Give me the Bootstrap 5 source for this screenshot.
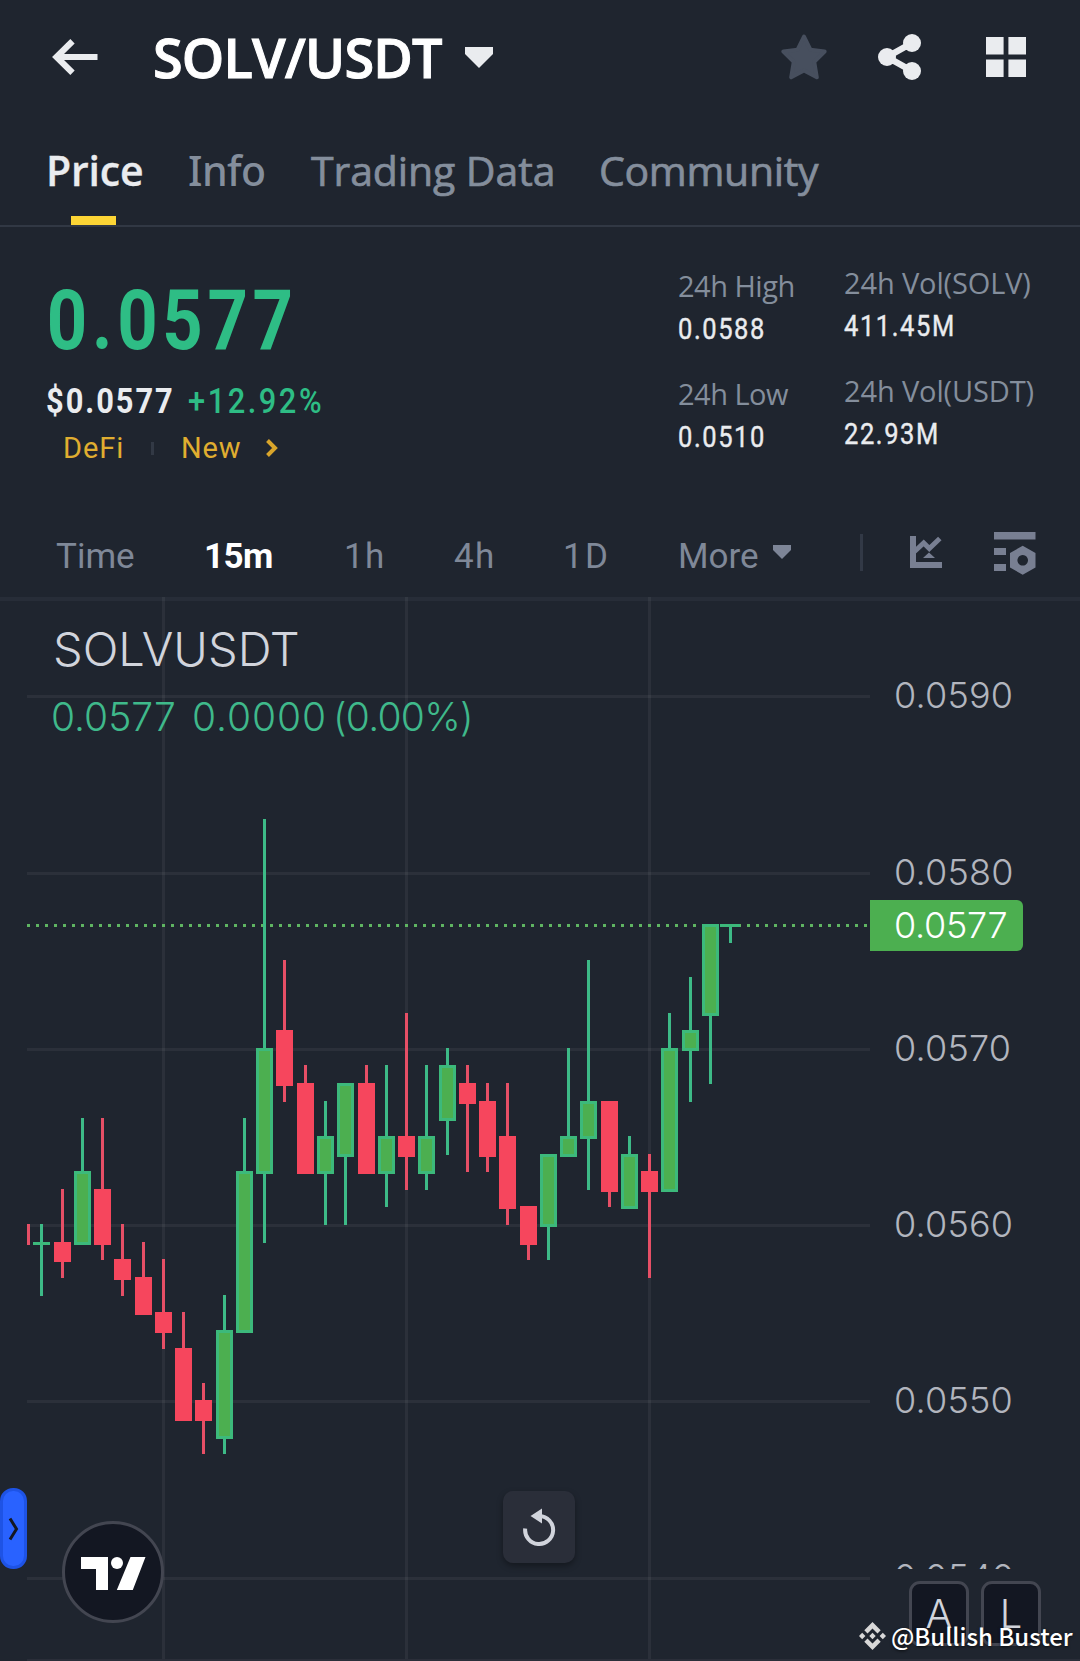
<!DOCTYPE html>
<html lang="en" data-bs-theme="dark">
<head>
<meta charset="utf-8">
<meta name="viewport" content="width=device-width, initial-scale=1">
<title>SOLV/USDT</title>
<link href="https://cdn.jsdelivr.net/npm/bootstrap@5.3.0/dist/css/bootstrap.min.css" rel="stylesheet">
<script src="https://cdn.jsdelivr.net/npm/bootstrap@5.3.0/dist/js/bootstrap.bundle.min.js"></script>
<style>
  body { background: #1f252f; color: #eaecef; font-family: Roboto, sans-serif; width: 1080px; height: 1661px; overflow: hidden; }
  svg { display: block; flex: none; }
  .fit { display: block; flex: none; white-space: nowrap; }
  /* narrow numerals */
  .slim { transform: scaleX(.88); transform-origin: 0 50%; }

  .topbar { height: 114px; padding-left: 52px; padding-right: 54px; }
  .pair-name { font: 600 54px/60px "Open Sans", sans-serif; letter-spacing: -.83px; width: 287px; margin-left: 57px; text-indent: -2px; color: #fff; -webkit-text-stroke: 1px #fff; }
  .pair-caret { margin-left: 23px; margin-top: 1px; }
  .topbar .acts { gap: 57px; }
  .topbar .share { margin-left: -6px; }
  .topbar .grid4 { margin-left: 8px; }

  .tabs { height: 113px; padding: 28px 0 0 48px; border-bottom: 2px solid #313844; font: 500 41px/56px "Open Sans", sans-serif; color: #848e9c; -webkit-text-stroke: .7px #848e9c; }
  .tabs .t1 { width: 93px; font-weight: 600; letter-spacing: -.17px; text-indent: -2px; color: #eaecef; -webkit-text-stroke: .3px #eaecef; height: 83px; }
  .tabs .t1::after { content: ""; position: absolute; left: 23px; bottom: 0; width: 45px; height: 9px; background: #fcd535; }
  .tabs .t2 { width: 75px; margin-left: 48px; font-family: "Noto Sans", sans-serif; letter-spacing: -.62px; text-indent: -1px; -webkit-text-stroke: 0; }
  .tabs .t3 { width: 243px; margin-left: 47px; letter-spacing: -.1px; }
  .tabs .t4 { width: 218px; margin-left: 46px; letter-spacing: -.33px; text-indent: -1px; }

  .summary { height: 288px; }
  .last { flex: none; width: 678px; padding: 44px 0 0 46px; }
  .last-price { font-size: 84px; line-height: 100px; font-weight: 700; letter-spacing: 5.56px; text-indent: 1px; color: #2ebd85; transform: scaleX(.84); transform-origin: 0 50%; }
  .last-sub { margin-top: 11px; font-size: 35px; line-height: 40px; gap: 16px; }
  .last-sub .usd { width: 126px; font-weight: 700; letter-spacing: 2.24px; }
  .last-sub .pct { font-weight: 500; letter-spacing: 2.88px; color: #2ebd85; }
  .tags { margin-top: 6px; padding-left: 17px; font-size: 29px; line-height: 40px; letter-spacing: .9px; color: #e0ae30; }
  .tags .g1 { width: 88px; }
  .tags i { width: 3px; height: 13px; background: #323945; margin-right: 27px; }
  .tags .g2 { width: 85px; }
  .stats { flex: none; font-size: 29px; line-height: 40px; padding-top: 39px; }
  .stats dt { font: 400 29px/40px "Open Sans", sans-serif; color: #848e9c; letter-spacing: -.14px; white-space: nowrap; }
  .stats dd { margin: 3px 0 25px; font-weight: 400; letter-spacing: 1.8px; color: #eaecef; -webkit-text-stroke: .4px #eaecef; white-space: nowrap; }
  .stats.s1 { width: 166px; }
  .stats.s1 dt { letter-spacing: -.5px; }
  .stats.s2 { padding-top: 36px; }

  .frames { height: 82px; padding-top: 1px; font-size: 35px; line-height: 40px; color: #7f8898; }
  .frames .f1 { margin-left: 56px; width: 78px; }
  .frames .f2 { margin-left: 72px; width: 66px; font-weight: 700; letter-spacing: -.58px; text-indent: -2px; color: #fff; }
  .frames .f3 { margin-left: 74px; width: 36px; letter-spacing: 1.3px; text-indent: -2px; }
  .frames .f4 { margin-left: 72px; width: 38px; letter-spacing: 1.3px; }
  .frames .f5 { margin-left: 73px; width: 41px; letter-spacing: 2.3px; text-indent: -2px; }
  .frames .f6 { margin-left: 74px; width: 78px; text-indent: -2px; }
  .frames .caret { margin: -9px 0 0 15px; }
  .frames .bar { margin: -9px 0 0 69px; width: 3px; height: 37px; background: #323946; }
  .frames .ind { margin: -8px 0 0 47px; }
  .frames .cfg { margin: -6px 0 0 51px; }

  .chart { height: 1064px; font-family: Inter, sans-serif; font-weight: 300; }
  .legend { left: 55px; top: 22px; }
  .legend .sym { font-size: 47px; line-height: 60px; text-indent: -2px; color: #d1d4dc; }
  .legend .val { font-size: 39px; line-height: 48px; margin: 14px 0 0 -2px; color: #3fb98b; }
  .legend .v1 { width: 141px; text-indent: -2px; }
  .legend .v2 { width: 143px; letter-spacing: .92px; text-indent: -2px; }
  .legend .v3 { letter-spacing: -.74px; text-indent: -4px; }
  .tick { left: 894px; height: 40px; line-height: 40px; font-size: 36px; letter-spacing: .2px; color: #b2b5be; }
  .tick.cut { height: 12px; overflow: hidden; }
  .price-tag { left: 870px; top: 303px; width: 153px; height: 51px; padding-left: 24px; font-size: 36px; line-height: 51px; letter-spacing: -.3px; background: #4caf50; color: #fff; border-radius: 0 6px 6px 0; }
  .drawer { left: 0; top: 891px; width: 27px; height: 81px; border-radius: 13px; background: #2962ff; border: 3px solid #1e53e5; }
  .tv { left: 62px; top: 924px; width: 102px; height: 102px; border-radius: 50%; background: #131722; border: 3px solid #434651; }
  .reset { left: 503px; top: 894px; width: 72px; height: 72px; border-radius: 10px; background: #2a2e39; box-shadow: 0 3px 6px rgba(0,0,0,.35); }
  .sq { top: 984px; width: 60px; height: 65px; border: 3px solid #434651; border-radius: 11px; background: #131722; font-size: 40px; line-height: 60px; color: #d1d4dc; text-align: center; }
  .sq.a { left: 909px; }
  .sq.l { left: 981px; }
  .credit { left: 859px; top: 1021px; gap: 5px; font: 500 24px/36px "Noto Sans CJK SC", "Noto Sans", sans-serif; color: #fff; text-shadow: 0 1px 3px rgba(0,0,0,.7); }
</style>
</head>
<body>
<header class="topbar d-flex align-items-center">
  <svg width="46" height="36" viewBox="0 0 46 36" fill="none" stroke="#eaecef" stroke-width="6.2"><path d="M45.5 18H5M20.500 2.300L4.500 18l16 15.700"/></svg>
  <h1 class="pair-name fit mb-0">SOLV/USDT</h1>
  <svg class="pair-caret" width="28" height="21" viewBox="0 0 28 21"><path d="M0 0h28v7L14 21 0 7z" fill="#eaecef"/></svg>
  <div class="acts d-flex align-items-center ms-auto">
    <svg width="46" height="46" viewBox="0 0 46 46"><path d="M23 2.500l6.400 13.200 14.200 1.800-10.400 10.200 2.600 15.600L23 36.600l-12.800 6.700 2.600-15.600L2.400 17.500l14.200-1.800z" fill="#474f5e" stroke="#474f5e" stroke-width="4" stroke-linejoin="round"/></svg>
    <svg class="share" width="43" height="46" viewBox="0 0 43 46" fill="#eaecef"><path d="M34 9L9 23l25 14" fill="none" stroke="#eaecef" stroke-width="6.500"/><circle cx="34" cy="9" r="9"/><circle cx="9" cy="23" r="9"/><circle cx="34" cy="37" r="9"/></svg>
    <svg class="grid4" width="40" height="40" viewBox="0 0 40 40" fill="#eaecef"><path d="M0 0h17.600v17.600H0zM22.400 0H40v17.600H22.400zM0 22.400h17.600V40H0zM22.400 22.400H40V40H22.400z"/></svg>
  </div>
</header>

<nav class="tabs d-flex">
  <span class="t1 fit position-relative">Price</span>
  <span class="t2 fit">Info</span>
  <span class="t3 fit">Trading Data</span>
  <span class="t4 fit">Community</span>
</nav>

<section class="summary d-flex">
  <div class="last">
    <div class="last-price">0.0577</div>
    <div class="last-sub d-flex"><span class="usd fit slim">$0.0577</span><span class="pct fit slim">+12.92%</span></div>
    <div class="tags d-flex align-items-center"><span class="g1">DeFi</span><i></i><span class="g2">New</span>
      <svg width="12" height="18" viewBox="0 0 12 18" fill="none" stroke="#d9a52b" stroke-width="4"><path d="M1.500 1.500L9 9l-7.500 7.500"/></svg>
    </div>
  </div>
  <dl class="stats s1 mb-0"><dt>24h High</dt><dd class="slim">0.0588</dd><dt>24h Low</dt><dd class="slim">0.0510</dd></dl>
  <dl class="stats s2 mb-0"><dt>24h Vol(SOLV)</dt><dd class="slim">411.45M</dd><dt>24h Vol(USDT)</dt><dd class="slim">22.93M</dd></dl>
</section>

<div class="frames d-flex align-items-center">
  <span class="f1 fit">Time</span><span class="f2 fit">15m</span><span class="f3 fit">1h</span><span class="f4 fit">4h</span><span class="f5 fit">1D</span><span class="f6 fit">More</span>
  <svg class="caret" width="18" height="14" viewBox="0 0 18 14"><path d="M0 0h18v5L9 14 0 5z" fill="#7d8597"/></svg>
  <span class="bar"></span>
  <svg class="ind" width="33" height="33" viewBox="0 0 33 33" fill="#787f92"><path d="M0 0h6v26h26v6H0z"/><path d="M4.500 15.500L13.700 7l5.600 5.600L29.800 2.500" fill="none" stroke="#787f92" stroke-width="5"/><path d="M19 16.500l6 5.500H13z"/></svg>
  <svg class="cfg" width="42" height="44" viewBox="0 0 42 44" fill="#787f92"><path d="M0 0h41.500v7.500H0zM0 16h12v7H0zM0 32h12v7H0z"/><path fill-rule="evenodd" d="M28.700 13.800l12.800 7.200v14.500l-12.800 7.200-12.700-7.200V21zm0 9.200a5.300 5.300 0 1 0 .01 0z"/></svg>
</div>

<main class="chart position-relative">
  <svg id="plot" width="1080" height="1064" viewBox="0 597 1080 1064" shape-rendering="crispEdges"></svg>
  <div class="legend position-absolute">
    <div class="sym">SOLVUSDT</div>
    <div class="val d-flex"><span class="v1 fit">0.0577</span><span class="v2 fit">0.0000</span><span class="v3 fit">(0.00%)</span></div>
  </div>
  <div id="ticks"></div>
  <div class="price-tag position-absolute">0.0577</div>
  <div class="drawer position-absolute d-flex align-items-center justify-content-center">
    <svg width="11" height="24" viewBox="0 0 11 24" fill="none" stroke="#131722" stroke-width="3"><path d="M2 1.500L8.500 12 2 22.500"/></svg>
  </div>
  <div class="tv position-absolute">
    <svg width="96" height="96" viewBox="65 1524 96 96" fill="#fff"><path d="M81 1557h27v33H96v-21H81zM130.500 1557h15l-12.700 33h-16z"/><circle cx="117" cy="1563" r="6"/></svg>
  </div>
  <button class="reset btn p-0 border-0 position-absolute d-flex align-items-center justify-content-center">
    <svg width="34" height="38" viewBox="0 0 34 38"><path d="M3.200 20.500A14 14 0 1 0 17.500 8" fill="none" stroke="#d1d4dc" stroke-width="4"/><path d="M8.500 8L20 .500v15z" fill="#d1d4dc"/></svg>
  </button>
  <div class="sq a position-absolute">A</div>
  <div class="sq l position-absolute">L</div>
  <div class="credit position-absolute d-flex align-items-center">
    <svg width="27" height="28" viewBox="0 0 27 28" fill="#d8d8d8"><path d="M13.500 0l8.200 8.300-3.200 3.200-5-5.100-5 5.100-3.200-3.200zM13.500 28l8.200-8.300-3.200-3.200-5 5.100-5-5.100-3.200 3.200zM13.500 10.800l3.200 3.200-3.200 3.200-3.200-3.200zM3.200 10.800L6.400 14l-3.200 3.200L0 14zM23.800 10.800L27 14l-3.200 3.200-3.200-3.200z"/></svg>
    <span class="fit">@Bullish Buster</span>
  </div>
</main>

<script>
  // Candles as [open, high, low, close], in units of 0.0001 USDT; one every 15 minutes
  const candles = [
    [560,560,559,559],[559,560,556,559],[559,562,557,558],[559,566,559,563],[562,566,558,559],[558,560,556,557],
    [557,559,555,555],[555,558,553,554],[553,555,549,549],[550,551,547,549],[548,556,547,554],[554,566,554,563],
    [563,583,559,570],[571,575,567,568],[568,569,563,563],[563,567,560,565],[564,568,560,568],[568,569,563,563],
    [563,569,561,565],[565,572,562,564],[563,569,562,565],[566,570,564,569],[568,569,563,567],[567,568,563,564],
    [565,568,560,561],[561,561,558,559],[560,564,558,564],[564,570,564,565],[565,575,562,567],[567,567,561,562],
    [561,565,561,564],[563,564,557,562],[562,572,562,570],[570,574,567,571],[572,577,568,577],[577,577,576,577]
  ];
  const y = p => Math.floor(1049.3 + (570 - p) * 17.63);
  const r = (x, t, w, h, c, o = 1) => `<rect x="${x}" y="${t}" width="${w}" height="${h}" fill="${c}" fill-opacity="${o}"/>`;
  let s = r(0, 597, 1080, 4, '#272d38');
  for (const gx of [162, 405, 648]) s += r(gx, 597, 3, 1062, '#fff', .055);
  for (let p = 590; p >= 540; p -= 10) s += r(27, y(p) - 1, 843, 3, '#fff', .055);
  s += r(27, 1659, 1053, 2, '#2a2e39');
  for (let x = 27; x < 868; x += 9) s += r(x, 924, 3, 3, '#5fb562');
  candles.forEach(([o, h, l, c], i) => {
    const up = c >= o && i !== 0, live = i === candles.length - 1;
    const cx = Math.floor(163.4 + (i - 7) * 20.26);
    const wick = up ? '#3dba87' : '#e64f66';
    const top = y(Math.max(o, c)) - 1, bot = y(Math.min(o, c)) + 2;
    if (i === 0) { s += r(27, top, 3, bot - top, wick); return; }
    s += r(cx - 1, y(h) - 1, 3, y(l) - y(h) + 1, wick);
    s += r(cx - (live ? 10 : 8), top, live ? 20 : 17, bot - top, up ? '#3cb97b' : '#f6465d');
    if (up && bot - top > 6) s += r(cx - 5, top + 3, 11, bot - top - 6, '#4caf50');
  });
  plot.innerHTML = s;
  ticks.innerHTML = [590, 580, 570, 560, 550, 540].map(p =>
    `<div class="tick position-absolute${p === 540 ? ' cut' : ''}" style="top:${y(p) - 598 - 20}px">0.0${p}</div>`).join('');
</script>
</body>
</html>
